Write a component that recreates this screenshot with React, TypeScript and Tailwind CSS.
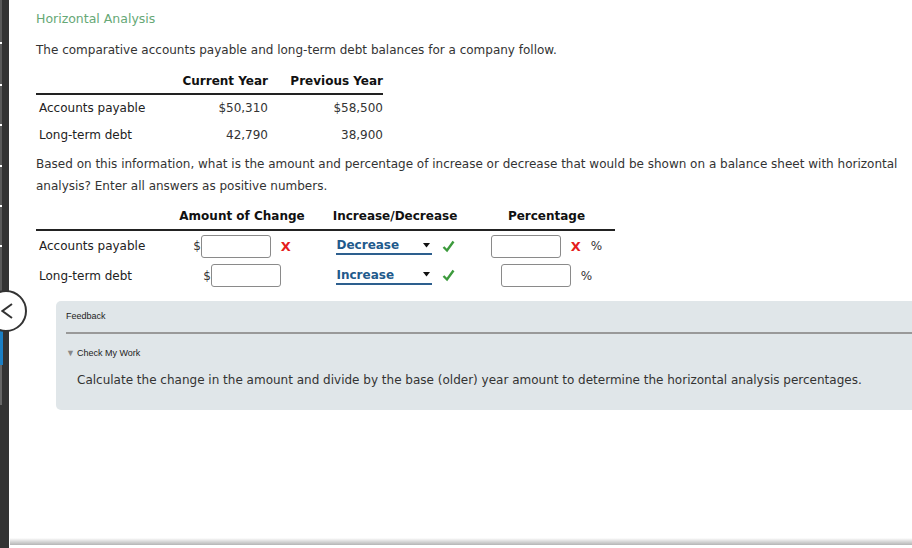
import React from "react";

// Horizontal analysis question — balance sheet change table with feedback panel

const BASE = [
  { label: "Accounts payable", current: "$50,310", previous: "$58,500" },
  { label: "Long-term debt", current: "42,790", previous: "38,900" },
];

const ANSWERS = [
  { label: "Accounts payable", choice: "Decrease", amountWrong: true, pctWrong: true },
  { label: "Long-term debt", choice: "Increase", amountWrong: false, pctWrong: false },
];

function Cross() {
  return <span className="text-[#e51c1c] font-bold text-[13px] leading-none">X</span>;
}

function Check() {
  return (
    <svg width="13" height="13" viewBox="0 0 13 13" className="shrink-0">
      <path d="M1.5 7 L5 10.5 L11.5 1.5" fill="none" stroke="#3c9a3c" strokeWidth="2.4" />
    </svg>
  );
}

function Box() {
  return <div className="w-[70px] h-[23px] bg-white border border-[#8a8a8a] rounded-[3px]" />;
}

function Select({ value }: { value: string }) {
  return (
    <div className="w-[96px] h-[18px] flex items-center justify-between border-b-2 border-[#2d5f8e] pl-[1px] pr-[2px]">
      <span className="text-[#1f5a8c] font-bold text-[12px] leading-none">{value}</span>
      <svg width="7" height="5" viewBox="0 0 7 5">
        <path d="M0 0 L7 0 L3.5 4.5 Z" fill="#111" />
      </svg>
    </div>
  );
}

export default function App() {
  return (
    <div
      className="relative w-[912px] h-[548px] bg-white overflow-hidden flex text-[#333]"
      style={{ fontFamily: '"DejaVu Sans", Verdana, sans-serif' }}
    >
      {/* left rail */}
      <div className="w-[9px] h-full bg-[#333] relative shrink-0">
        <div className="absolute left-0 top-0 w-[2px] h-[320px] bg-[#5a5a5a]" />
        {[42, 84, 124, 165, 205, 245].map((y) => (
          <div key={y} className="absolute left-0 w-[2px] h-[2px] bg-white" style={{ top: y }} />
        ))}
        <div className="absolute left-0 top-[320px] w-[3px] h-[45px] bg-[#1b7fc4]" />
        <div className="absolute left-0 top-[365px] w-[2px] h-[40px] bg-[#666]" />
      </div>
      <div className="absolute left-[-15px] top-[290px] w-[42px] h-[42px] rounded-full bg-white border-2 border-[#333] z-10">
        <svg width="12" height="16" viewBox="0 0 12 16" className="absolute left-[14px] top-[11px]">
          <path d="M11 1 L1.5 8 L11 15" fill="none" stroke="#333" strokeWidth="2" />
        </svg>
      </div>

      <div className="flex-1 pl-[27px] pt-[10px] text-[12px]">
        <h1 className="text-[#66a876] text-[12.5px] leading-[18px]">Horizontal Analysis</h1>
        <p className="mt-[14px] leading-[16px]">
          The comparative accounts payable and long-term debt balances for a company follow.
        </p>

        <table className="mt-[10px] border-collapse">
          <thead>
            <tr className="border-b-2 border-[#222]">
              <th className="w-[132px]" />
              <th className="w-[100px] text-right font-bold text-[#111] h-[26px] pr-0">Current Year</th>
              <th className="w-[115px] text-right font-bold text-[#111]">Previous Year</th>
            </tr>
          </thead>
          <tbody>
            {BASE.map((r) => (
              <tr key={r.label} className="h-[27px]">
                <td className="pl-[3px] text-[#222]">{r.label}</td>
                <td className="text-right">{r.current}</td>
                <td className="text-right">{r.previous}</td>
              </tr>
            ))}
          </tbody>
        </table>

        <p className="mt-[5px] leading-[22px] pr-[6px]">
          Based on this information, what is the amount and percentage of increase or decrease that would be shown on a balance sheet with horizontal analysis? Enter all answers as positive numbers.
        </p>

        <table className="mt-[6px] border-collapse">
          <thead>
            <tr className="border-b-2 border-[#222]">
              <th className="w-[136px]" />
              <th className="w-[140px] text-center font-bold text-[#111] h-[27px]">Amount of Change</th>
              <th className="w-[166px] text-center font-bold text-[#111]">Increase/Decrease</th>
              <th className="w-[137px] text-center font-bold text-[#111]">Percentage</th>
            </tr>
          </thead>
          <tbody>
            {ANSWERS.map((r, i) => (
              <tr key={r.label} className={i === 0 ? "h-[31px]" : "h-[29px]"}>
                <td className="pl-[3px] text-[#222]">{r.label}</td>
                <td>
                  <div className="flex items-center justify-center gap-[10px]">
                    <div className="flex items-center">
                      <span>$</span>
                      <Box />
                    </div>
                    {r.amountWrong && <Cross />}
                  </div>
                </td>
                <td>
                  <div className="flex items-center justify-center gap-[10px]">
                    <Select value={r.choice} />
                    <Check />
                  </div>
                </td>
                <td>
                  <div className="flex items-center justify-center gap-[10px]">
                    <Box />
                    {r.pctWrong && <Cross />}
                    <span>%</span>
                  </div>
                </td>
              </tr>
            ))}
          </tbody>
        </table>

        {/* feedback */}
        <div className="mt-[11px] ml-[20px] -mr-[4px] h-[109px] bg-[#e0e6e9] rounded-l-[5px] pl-[10px] pt-[9px]">
          <div className="text-[9px] text-[#222] leading-[12px]" style={{ fontFamily: '"Liberation Sans", Arial, sans-serif' }}>
            Feedback
          </div>
          <div className="mt-[10px] border-t-2 border-[#999]" />
          <div
            className="mt-[13px] flex items-center gap-[2px] text-[9px] text-[#222] leading-[12px]"
            style={{ fontFamily: '"Liberation Sans", Arial, sans-serif' }}
          >
            <span className="text-[#888] text-[9px]">▼</span>
            <span>Check My Work</span>
          </div>
          <p className="mt-[12px] ml-[11px] text-[12px] text-[#333]">
            Calculate the change in the amount and divide by the base (older) year amount to determine the horizontal analysis percentages.
          </p>
        </div>
      </div>

      {/* bottom shadow */}
      <div className="absolute left-[10px] right-0 top-[538px] h-[7px] bg-gradient-to-b from-white via-[#d8d8d8] to-[#b5b5b5]" />
    </div>
  );
}
